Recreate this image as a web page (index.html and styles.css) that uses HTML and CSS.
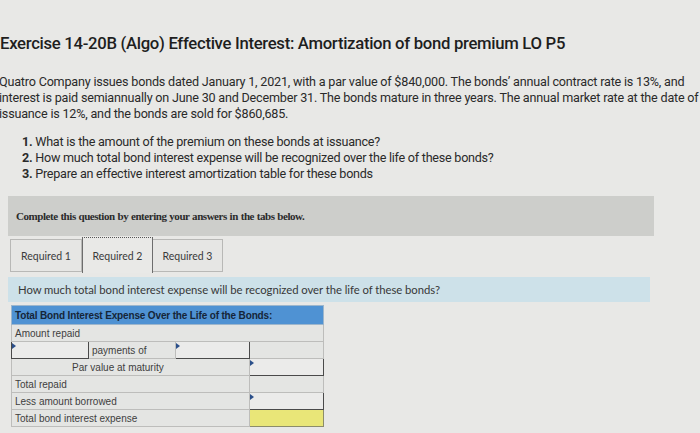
FILE: index.html
```html
<!DOCTYPE html>
<html lang="en">
<head>
<meta charset="utf-8">
<title>Exercise 14-20B</title>
<link rel="stylesheet" href="styles.css">
</head>
<body>
<main class="page">
  <h1 class="title">Exercise 14-20B (Algo) Effective Interest: Amortization of bond premium LO P5</h1>
  <p class="intro">Quatro Company issues bonds dated January 1, 2021, with a par value of $840,000. The bonds’ annual contract rate is 13%, and<br>interest is paid semiannually on June 30 and December 31. The bonds mature in three years. The annual market rate at the date of<br>issuance is 12%, and the bonds are sold for $860,685.</p>
  <ol class="reqs">
    <li><b>1.</b> What is the amount of the premium on these bonds at issuance?</li>
    <li><b>2.</b> How much total bond interest expense will be recognized over the life of these bonds?</li>
    <li><b>3.</b> Prepare an effective interest amortization table for these bonds</li>
  </ol>
  <div class="instructions">Complete this question by entering your answers in the tabs below.</div>
  <div class="tabs">
    <div class="tab">Required 1</div>
    <div class="tab active">Required 2</div>
    <div class="tab">Required 3</div>
  </div>
  <div class="question">How much total bond interest expense will be recognized over the life of these bonds?</div>
  <table class="sheet">
    <colgroup><col class="c1"><col class="c2"><col class="c3"><col class="c4"></colgroup>
    <tr><th colspan="4">Total Bond Interest Expense Over the Life of the Bonds:</th></tr>
    <tr><td colspan="4">Amount repaid</td></tr>
    <tr><td class="input"></td><td>payments of</td><td class="input"></td><td></td></tr>
    <tr><td colspan="3" class="indent">Par value at maturity</td><td class="input"></td></tr>
    <tr><td colspan="3">Total repaid</td><td></td></tr>
    <tr><td colspan="3">Less amount borrowed</td><td class="input"></td></tr>
    <tr><td colspan="3">Total bond interest expense</td><td class="result"></td></tr>
  </table>
</main>
</body>
</html>
```
FILE: styles.css
```css
html, body {
  margin: 0;
  padding: 0;
}
body {
  width: 700px;
  height: 433px;
  overflow: hidden;
  background: #e8e8e6;
  color: #222;
  font-family: Roboto, "Liberation Sans", sans-serif;
}
.page {
  padding-top: 33px;
}
.title {
  margin: 0;
  font-size: 16.7px;
  font-weight: 500;
  line-height: 22px;
  letter-spacing: -0.3px;
  color: #1e1e1e;
  white-space: nowrap;
}
.intro {
  margin: 19px 0 0 -1px;
  font-size: 12.6px;
  line-height: 16px;
  letter-spacing: -0.2px;
  color: #2a2a2a;
  white-space: nowrap;
}
.reqs {
  list-style: none;
  margin: 12px 0 0 22px;
  padding: 0;
  font-size: 12.6px;
  line-height: 16px;
  letter-spacing: -0.25px;
  color: #2a2a2a;
  white-space: nowrap;
}
.instructions {
  margin: 14px 0 0 8px;
  width: 646px;
  height: 40px;
  padding-left: 8px;
  box-sizing: border-box;
  background: #cdcecb;
  display: flex;
  align-items: center;
  font-family: "Liberation Serif", serif;
  font-weight: bold;
  font-size: 11px;
  letter-spacing: -0.45px;
  word-spacing: 0.5px;
  color: #2b2b2b;
}
.tabs {
  display: flex;
  align-items: flex-start;
  margin: 1px 0 0 10px;
  height: 36px;
}
.tab {
  box-sizing: border-box;
  width: 72px;
  height: 33px;
  margin-top: 2px;
  border: 1px solid #b8b8b6;
  background: #e6e6e4;
  display: flex;
  align-items: center;
  justify-content: center;
  font-family: Lato, sans-serif;
  font-size: 10.5px;
  color: #3a3a3a;
}
.tab.active {
  width: 71px;
  height: 36px;
  margin-top: 0;
  border: 1px solid #6d6d6d;
  border-top: 1px dotted #555;
  border-bottom: none;
  background: #e9e9e7;
}
.tabs .tab:last-child {
  border-left: none;
  width: 70px;
}
.question {
  margin: 4px 0 0 8px;
  width: 642px;
  height: 25px;
  box-sizing: border-box;
  padding: 6px 0 0 10px;
  background: #cde1e9;
  font-family: Lato, sans-serif;
  font-size: 11.3px;
  letter-spacing: -0.05px;
  color: #383838;
}
.sheet {
  margin: 3px 0 0 11px;
  border-collapse: collapse;
  table-layout: fixed;
  width: 312px;
  font-family: "Liberation Sans", Arial, sans-serif;
  font-size: 10px;
  color: #3e3e3e;
}
.c1 { width: 77px; }
.c2 { width: 87px; }
.c3 { width: 74px; }
.c4 { width: 74px; }
.sheet th {
  height: 18px;
  padding: 0 0 0 3px;
  text-align: left;
  background: #4f92d3;
  color: #152538;
  font-size: 10px;
  font-weight: bold;
  letter-spacing: -0.15px;
  border: 1px solid #9db6cc;
}
.sheet td {
  height: 17px;
  padding: 0 0 0 3px;
  box-sizing: border-box;
  border: 1px solid #bdbdbb;
  background: #e4e5e3;
  white-space: nowrap;
}
.sheet td.indent {
  padding-left: 60px;
}
.sheet td.input {
  position: relative;
  border: 1px solid #4a4a4a;
  background: #ebebea;
}
.sheet td.input::before {
  content: "";
  position: absolute;
  left: 0;
  top: 1px;
  border-top: 3px solid transparent;
  border-bottom: 3px solid transparent;
  border-left: 4px solid #2b4f8a;
}
.sheet td.result {
  border: 1px solid #8c8c6a;
  background: #e9e678;
}
```
